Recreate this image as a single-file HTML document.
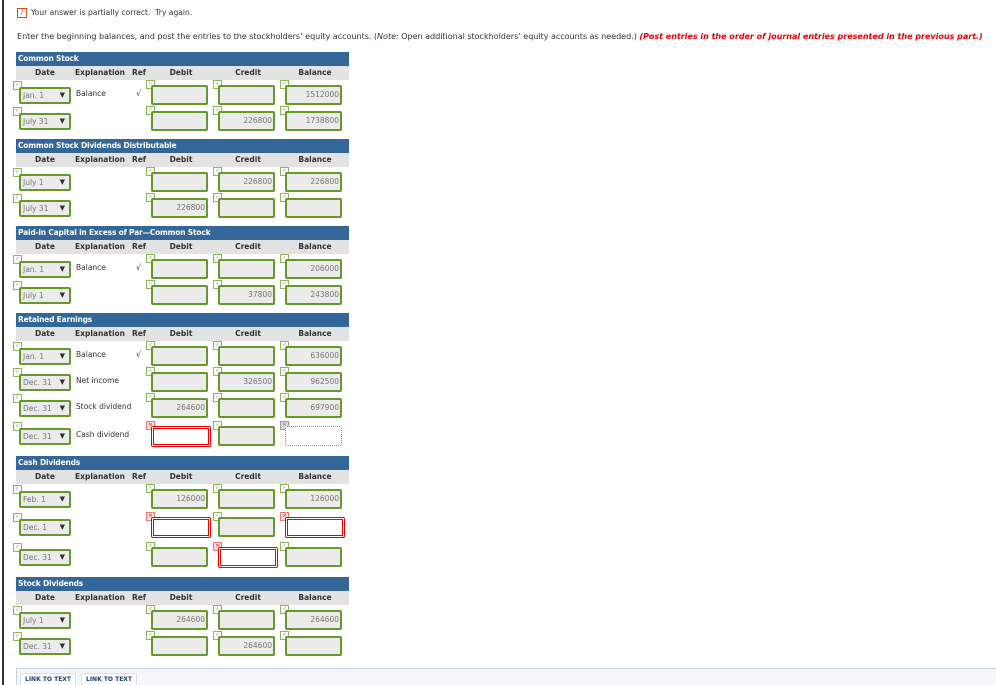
<!DOCTYPE html>
<html><head><meta charset="utf-8"><style>
html,body{margin:0;width:996px;height:685px;overflow:hidden}
body{background:#fff;position:relative;font-family:"DejaVu Sans","Liberation Sans",sans-serif;color:#333}
.vl{position:absolute;left:2px;top:0;width:2px;height:685px;background:#333}
.a{position:absolute}
.t{font-size:7.6px;white-space:nowrap}
.hb{position:absolute;left:16px;width:333px;height:14px;background:#336699;color:#fff;font-weight:bold;font-size:7.5px;line-height:14px;padding-left:2px;box-sizing:border-box;letter-spacing:-0.2px}
.hg{position:absolute;left:16px;width:333px;height:14px;background:#e2e2e2;font-weight:bold;font-size:7.5px;line-height:14px}
.hg span{position:absolute;top:0;transform:translateX(-50%)}
.sel{position:absolute;left:19px;width:52px;height:17px;border:2px solid #66992b;border-radius:2px;background:#ebebeb;box-sizing:border-box;font-size:7.5px;line-height:13px;color:#777;padding-left:2px}
.sel:after{content:"▼";position:absolute;right:4px;top:0;font-size:7px;color:#333}
.in{position:absolute;width:57px;height:20px;border:2px solid #66992b;border-radius:2px;background:#ebebeb;box-sizing:border-box;font-size:7.5px;line-height:16px;text-align:right;color:#777;padding-right:1px}
.in.bad{border:3px double #e00;background:#fff;border-radius:2px}
.in.dot{border:1px dotted #888;background:#fff}
.k{position:absolute;width:7px;height:7px;border:1px solid #8cb65a;background:#fff;font-size:5px;line-height:7px;text-align:center;color:#66992b}
.kx{border-color:#e77;color:#e00;background:#fdd}
.kg{border-color:#999;color:#666;background:#ddd}
.lbl{position:absolute;left:76px;font-size:7.5px}
.ck{position:absolute;left:136px;font-size:8px}
.btn{position:absolute;top:673px;height:11px;border:1px solid #dde;background:#fff;font-size:6px;font-weight:bold;color:#1d3f6e;line-height:11px;padding:0 4px}
</style></head><body>
<div class="vl"></div>
<div class="a" style="left:17px;top:8px;width:8px;height:8px;border:1px solid #e04a1a;font-size:6px;line-height:8px;text-align:center;color:#c30">/</div>
<div class="a t" style="left:31px;top:8px">Your answer is partially correct.&nbsp; Try again.</div>
<div class="a t" style="left:17px;top:31px;font-size:8.1px;letter-spacing:-0.05px">Enter the beginning balances, and post the entries to the stockholders’ equity accounts. (<i>Note:</i> Open additional stockholders’ equity accounts as needed.) <b style="color:#e00"><i>(Post entries in the order of journal entries presented in the previous part.)</i></b></div>

<div class="hb" style="top:52px">Common Stock</div>
<div class="hg" style="top:66px"><span style="left:29px">Date</span><span style="left:84px">Explanation</span><span style="left:123px">Ref</span><span style="left:165px">Debit</span><span style="left:232px">Credit</span><span style="left:299px">Balance</span></div>
<div class="hb" style="top:139px">Common Stock Dividends Distributable</div>
<div class="hg" style="top:153px"><span style="left:29px">Date</span><span style="left:84px">Explanation</span><span style="left:123px">Ref</span><span style="left:165px">Debit</span><span style="left:232px">Credit</span><span style="left:299px">Balance</span></div>
<div class="hb" style="top:226px">Paid-in Capital in Excess of Par—Common Stock</div>
<div class="hg" style="top:240px"><span style="left:29px">Date</span><span style="left:84px">Explanation</span><span style="left:123px">Ref</span><span style="left:165px">Debit</span><span style="left:232px">Credit</span><span style="left:299px">Balance</span></div>
<div class="hb" style="top:313px">Retained Earnings</div>
<div class="hg" style="top:327px"><span style="left:29px">Date</span><span style="left:84px">Explanation</span><span style="left:123px">Ref</span><span style="left:165px">Debit</span><span style="left:232px">Credit</span><span style="left:299px">Balance</span></div>
<div class="hb" style="top:456px">Cash Dividends</div>
<div class="hg" style="top:470px"><span style="left:29px">Date</span><span style="left:84px">Explanation</span><span style="left:123px">Ref</span><span style="left:165px">Debit</span><span style="left:232px">Credit</span><span style="left:299px">Balance</span></div>
<div class="hb" style="top:577px">Stock Dividends</div>
<div class="hg" style="top:591px"><span style="left:29px">Date</span><span style="left:84px">Explanation</span><span style="left:123px">Ref</span><span style="left:165px">Debit</span><span style="left:232px">Credit</span><span style="left:299px">Balance</span></div>

<div class="k" style="left:13px;top:81px">✓</div><div class="sel" style="top:87px">Jan. 1</div>
<div class="lbl" style="top:89px">Balance</div><div class="ck" style="top:89px">√</div>
<div class="k" style="left:146px;top:80px">✓</div><div class="in" style="left:151px;top:85px"></div>
<div class="k" style="left:213px;top:80px">✓</div><div class="in" style="left:218px;top:85px"></div>
<div class="k" style="left:280px;top:80px">✓</div><div class="in" style="left:285px;top:85px">1512000</div>
<div class="k" style="left:13px;top:107px">✓</div><div class="sel" style="top:113px">July 31</div>
<div class="k" style="left:146px;top:106px">✓</div><div class="in" style="left:151px;top:111px"></div>
<div class="k" style="left:213px;top:106px">✓</div><div class="in" style="left:218px;top:111px">226800</div>
<div class="k" style="left:280px;top:106px">✓</div><div class="in" style="left:285px;top:111px">1738800</div>

<div class="k" style="left:13px;top:168px">✓</div><div class="sel" style="top:174px">July 1</div>
<div class="k" style="left:146px;top:167px">✓</div><div class="in" style="left:151px;top:172px"></div>
<div class="k" style="left:213px;top:167px">✓</div><div class="in" style="left:218px;top:172px">226800</div>
<div class="k" style="left:280px;top:167px">✓</div><div class="in" style="left:285px;top:172px">226800</div>
<div class="k" style="left:13px;top:194px">✓</div><div class="sel" style="top:200px">July 31</div>
<div class="k" style="left:146px;top:193px">✓</div><div class="in" style="left:151px;top:198px">226800</div>
<div class="k" style="left:213px;top:193px">✓</div><div class="in" style="left:218px;top:198px"></div>
<div class="k" style="left:280px;top:193px">✓</div><div class="in" style="left:285px;top:198px"></div>

<div class="k" style="left:13px;top:255px">✓</div><div class="sel" style="top:261px">Jan. 1</div>
<div class="lbl" style="top:263px">Balance</div><div class="ck" style="top:263px">√</div>
<div class="k" style="left:146px;top:254px">✓</div><div class="in" style="left:151px;top:259px"></div>
<div class="k" style="left:213px;top:254px">✓</div><div class="in" style="left:218px;top:259px"></div>
<div class="k" style="left:280px;top:254px">✓</div><div class="in" style="left:285px;top:259px">206000</div>
<div class="k" style="left:13px;top:281px">✓</div><div class="sel" style="top:287px">July 1</div>
<div class="k" style="left:146px;top:280px">✓</div><div class="in" style="left:151px;top:285px"></div>
<div class="k" style="left:213px;top:280px">✓</div><div class="in" style="left:218px;top:285px">37800</div>
<div class="k" style="left:280px;top:280px">✓</div><div class="in" style="left:285px;top:285px">243800</div>

<div class="k" style="left:13px;top:342px">✓</div><div class="sel" style="top:348px">Jan. 1</div>
<div class="lbl" style="top:350px">Balance</div><div class="ck" style="top:350px">√</div>
<div class="k" style="left:146px;top:341px">✓</div><div class="in" style="left:151px;top:346px"></div>
<div class="k" style="left:213px;top:341px">✓</div><div class="in" style="left:218px;top:346px"></div>
<div class="k" style="left:280px;top:341px">✓</div><div class="in" style="left:285px;top:346px">636000</div>
<div class="k" style="left:13px;top:368px">✓</div><div class="sel" style="top:374px">Dec. 31</div>
<div class="lbl" style="top:376px">Net income</div>
<div class="k" style="left:146px;top:367px">✓</div><div class="in" style="left:151px;top:372px"></div>
<div class="k" style="left:213px;top:367px">✓</div><div class="in" style="left:218px;top:372px">326500</div>
<div class="k" style="left:280px;top:367px">✓</div><div class="in" style="left:285px;top:372px">962500</div>
<div class="k" style="left:13px;top:394px">✓</div><div class="sel" style="top:400px">Dec. 31</div>
<div class="lbl" style="top:402px">Stock dividend</div>
<div class="k" style="left:146px;top:393px">✓</div><div class="in" style="left:151px;top:398px">264600</div>
<div class="k" style="left:213px;top:393px">✓</div><div class="in" style="left:218px;top:398px"></div>
<div class="k" style="left:280px;top:393px">✓</div><div class="in" style="left:285px;top:398px">697900</div>
<div class="k" style="left:13px;top:422px">✓</div><div class="sel" style="top:428px">Dec. 31</div>
<div class="lbl" style="top:430px">Cash dividend</div>
<div class="k kx" style="left:146px;top:421px">✕</div><div class="in bad" style="left:151px;top:426px;width:60px;height:21px"></div>
<div class="k" style="left:213px;top:421px">✓</div><div class="in" style="left:218px;top:426px"></div>
<div class="k kg" style="left:280px;top:421px">✕</div><div class="in dot" style="left:285px;top:426px"></div>

<div class="k" style="left:13px;top:485px">✓</div><div class="sel" style="top:491px">Feb. 1</div>
<div class="k" style="left:146px;top:484px">✓</div><div class="in" style="left:151px;top:489px">126000</div>
<div class="k" style="left:213px;top:484px">✓</div><div class="in" style="left:218px;top:489px"></div>
<div class="k" style="left:280px;top:484px">✓</div><div class="in" style="left:285px;top:489px">126000</div>
<div class="k" style="left:13px;top:513px">✓</div><div class="sel" style="top:519px">Dec. 1</div>
<div class="k kx" style="left:146px;top:512px">✕</div><div class="in bad" style="left:151px;top:517px;width:60px;height:21px"></div>
<div class="k" style="left:213px;top:512px">✓</div><div class="in" style="left:218px;top:517px"></div>
<div class="k kx" style="left:280px;top:512px">✕</div><div class="in bad" style="left:285px;top:517px;width:60px;height:21px"></div>
<div class="k" style="left:13px;top:543px">✓</div><div class="sel" style="top:549px">Dec. 31</div>
<div class="k" style="left:146px;top:542px">✓</div><div class="in" style="left:151px;top:547px"></div>
<div class="k kx" style="left:213px;top:542px">✕</div><div class="in bad" style="left:218px;top:547px;width:60px;height:21px"></div>
<div class="k" style="left:280px;top:542px">✓</div><div class="in" style="left:285px;top:547px"></div>

<div class="k" style="left:13px;top:606px">✓</div><div class="sel" style="top:612px">July 1</div>
<div class="k" style="left:146px;top:605px">✓</div><div class="in" style="left:151px;top:610px">264600</div>
<div class="k" style="left:213px;top:605px">✓</div><div class="in" style="left:218px;top:610px"></div>
<div class="k" style="left:280px;top:605px">✓</div><div class="in" style="left:285px;top:610px">264600</div>
<div class="k" style="left:13px;top:632px">✓</div><div class="sel" style="top:638px">Dec. 31</div>
<div class="k" style="left:146px;top:631px">✓</div><div class="in" style="left:151px;top:636px"></div>
<div class="k" style="left:213px;top:631px">✓</div><div class="in" style="left:218px;top:636px">264600</div>
<div class="k" style="left:280px;top:631px">✓</div><div class="in" style="left:285px;top:636px"></div>

<div class="a" style="left:16px;top:668px;width:980px;height:17px;background:#f4f7fa;border-top:1px solid #c8d2de;border-left:1px solid #c8d2de"></div>
<div class="btn" style="left:20px">LINK TO TEXT</div>
<div class="btn" style="left:81px">LINK TO TEXT</div>
</body></html>
